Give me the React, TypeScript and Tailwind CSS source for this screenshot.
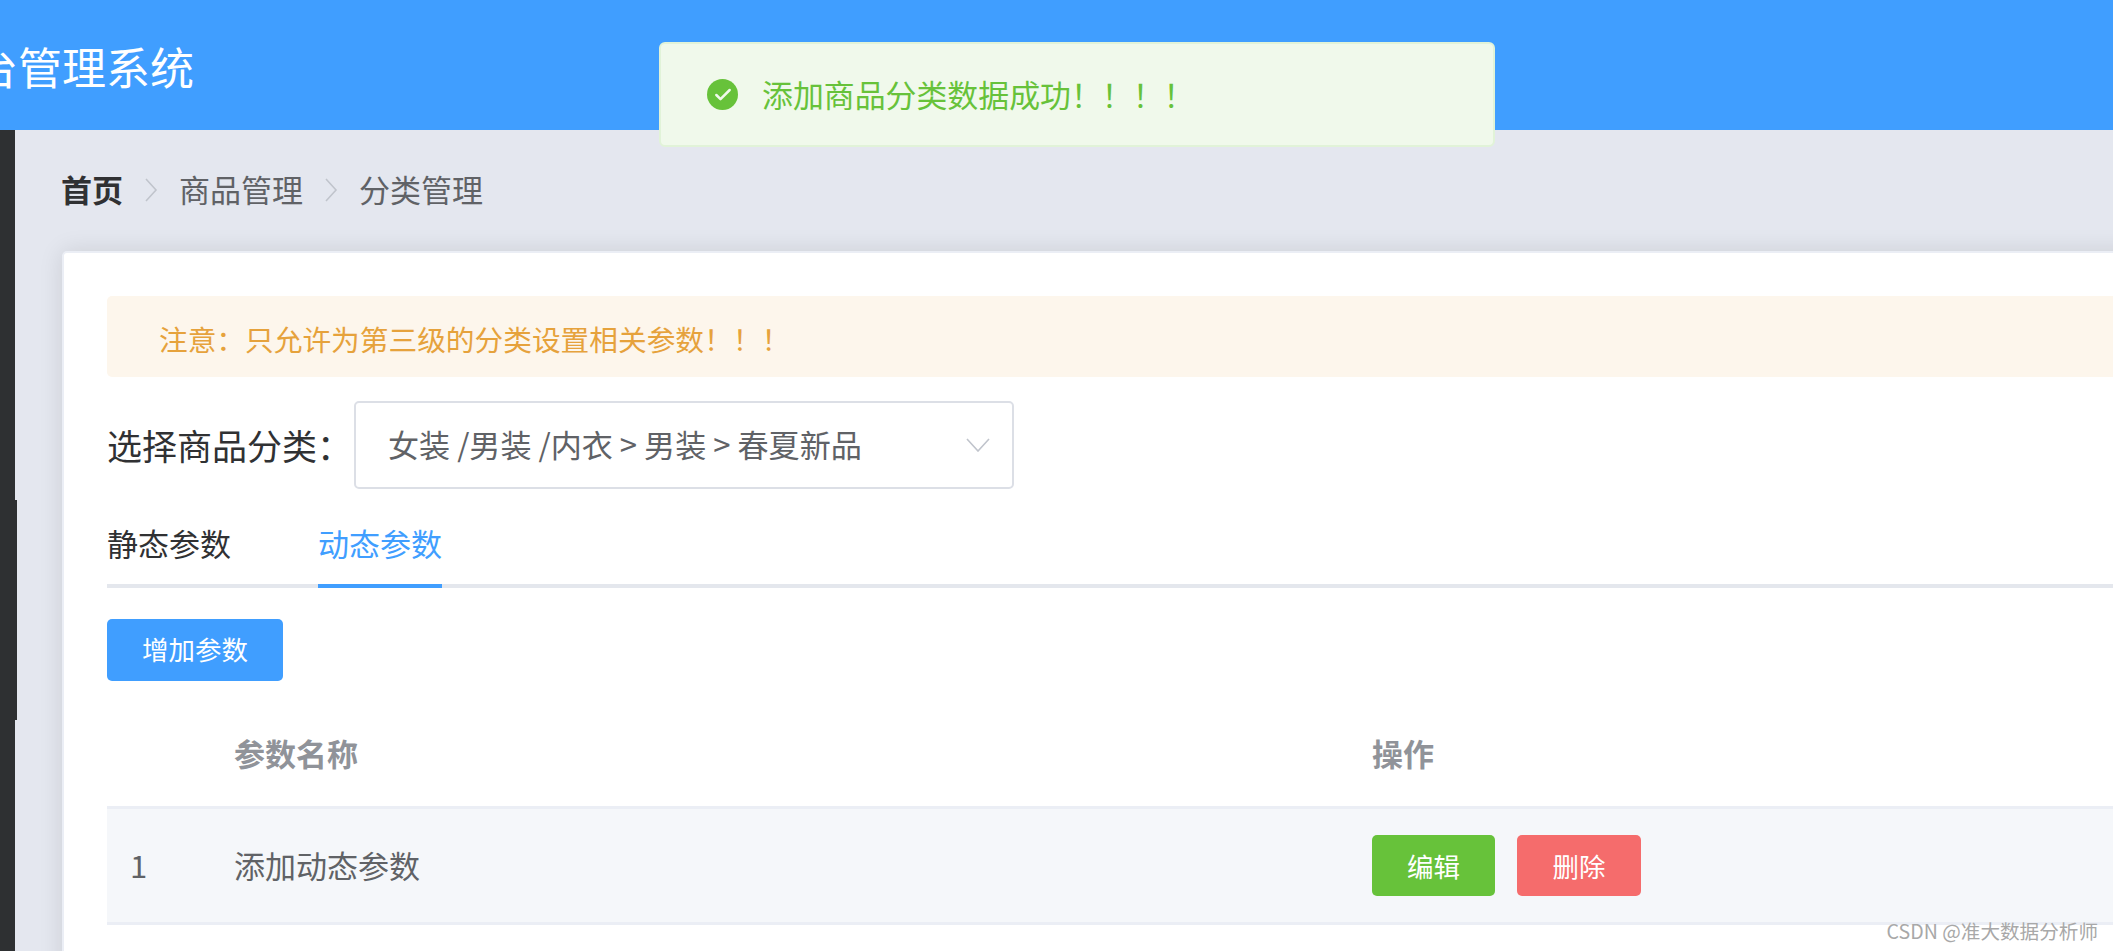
import { Check } from 'lucide-react'

const cjk = { fontFamily: '"Noto Sans CJK SC", "Liberation Sans", sans-serif' }

const Separator = () => (
  <svg width="14" height="26" viewBox="0 0 14 26" fill="none" className="mx-[21px] text-[#c0c4cc]">
    <path d="M2 2l10 11L2 24" stroke="currentColor" strokeWidth="1.6" />
  </svg>
)

const App = () => {
  return (
    <div className="relative h-[951px] w-[2113px] overflow-hidden bg-[#e4e7ef]" style={cjk}>
      <header className="flex h-[130px] items-center overflow-hidden bg-[#409eff]">
        <span className="ml-[-70px] mt-[2px] whitespace-nowrap text-[44px] leading-none text-white">后台管理系统</span>
      </header>

      <div className="flex h-[821px]">
        <aside className="relative w-[15px] shrink-0 bg-[#2e3032]">
          <div className="absolute left-[15px] top-[370px] h-[220px] w-[2px] bg-[#2e3032]" />
        </aside>
        <main className="min-w-0 flex-1 pl-[47px]">
          <nav className="flex h-[121px] items-center pb-[2px] text-[31px] text-[#606266]">
            <span className="-ml-[1px] font-bold text-[#303133]">首页</span>
            <Separator />
            <span>商品管理</span>
            <Separator />
            <span>分类管理</span>
          </nav>

          <section className="h-[760px] w-[2100px] rounded-[5px] border-2 border-[#ebeef5] bg-white pl-[43px] pt-[43px] shadow-[0_0_24px_rgba(0,0,0,0.11)]">
            <div className="flex h-[81px] items-center rounded-[5px] bg-[#fdf6ec] pl-[52px] pt-[5px] text-[28.7px] text-[#e6a23c]">
              注意：只允许为第三级的分类设置相关参数！！！
            </div>

            <div className="mt-[24px] flex items-center">
              <span className="mr-[2px] text-[35px] text-[#303133]">选择商品分类：</span>
              <div className="flex h-[88px] w-[660px] items-center justify-between rounded-[5px] border-2 border-[#dcdfe6] pl-[32px] pr-[22px] text-[31.1px] text-[#606266]">
                <span className="-mt-[2px]">女装 /男装 /内衣 &gt; 男装 &gt; 春夏新品</span>
                <svg width="24" height="14" viewBox="0 0 24 14" fill="none" className="text-[#c0c4cc]">
                  <path d="M1 1l11 12L23 1" stroke="currentColor" strokeWidth="1.6" />
                </svg>
              </div>
            </div>

            <div className="mt-[31px] flex h-[68px] gap-[87px] border-b-4 border-[#e4e7ed] text-[31px]">
              <span className="text-[#303133]">静态参数</span>
              <span className="-mb-[4px] border-b-4 border-[#409eff] text-[#409eff]">动态参数</span>
            </div>

            <button className="mt-[31px] flex h-[62px] w-[176px] items-center justify-center rounded-[5px] bg-[#409eff] pb-[2px] text-[26.5px] text-white">
              增加参数
            </button>

            <div className="mt-[20px] text-[31px]">
              <div className="flex h-[108px] items-center border-b-[3px] border-[#ebeef5] font-bold text-[#909399]">
                <span className="ml-[127px] w-[1138px]">参数名称</span>
                <span>操作</span>
              </div>
              <div className="flex h-[116px] items-center border-b-[3px] border-[#ebeef5] bg-[#f5f7fa] text-[#606266]">
                <span className="w-[127px] pl-[23px]">1</span>
                <span className="w-[1138px]">添加动态参数</span>
                <button className="flex h-[61px] w-[123px] items-center justify-center rounded-[5px] bg-[#67c23a] text-[26.5px] text-white">编辑</button>
                <button className="ml-[22px] flex h-[61px] w-[124px] items-center justify-center rounded-[5px] bg-[#f56c6c] text-[26.5px] text-white">删除</button>
              </div>
            </div>
          </section>
        </main>
      </div>

      <div className="absolute left-[659px] top-[42px] flex h-[105px] w-[836px] items-center rounded-[6px] border-2 border-[#e1f3d8] bg-[#f0f9eb] pl-[46px] text-[30.9px] text-[#67c23a]">
        <span className="mr-[24px] flex h-[31px] w-[31px] items-center justify-center rounded-full bg-[#67c23a]">
          <Check size={20} strokeWidth={3} className="text-[#f0f9eb]" />
        </span>
        添加商品分类数据成功！！！！
      </div>

      <span className="absolute bottom-[6px] right-[15px] text-[19.6px] text-[#a8a8a8]">CSDN @准大数据分析师</span>
    </div>
  )
}

export default App
